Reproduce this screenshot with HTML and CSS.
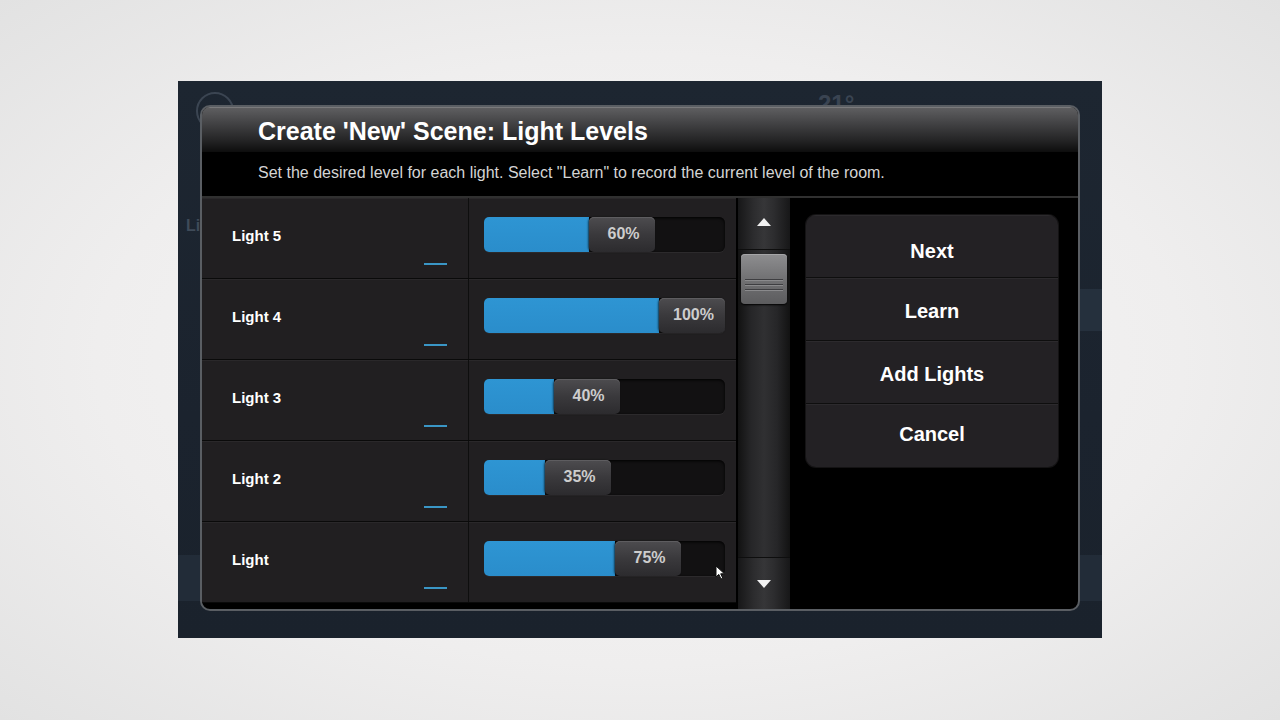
FILE: index.html
```html
<!DOCTYPE html>
<html lang="en">
<head>
    <meta charset="UTF-8">
    <meta name="viewport" content="width=device-width, initial-scale=1.0">
    <title>Create Scene - Light Levels</title>
    <link rel="stylesheet" href="styles.css">
</head>
<body>
    <div class="screen">
        <!-- things behind the dialog, mostly hidden -->
        <div class="bg-dial"></div>
        <span class="bg-temp">21°</span>
        <span class="bg-label">Li</span>
        <div class="bg-band"></div>
        <div class="bg-patch"></div>

        <div class="dialog">
            <div class="dialog-head">
                <h1>Create 'New' Scene: Light Levels</h1>
            </div>
            <p class="dialog-hint">Set the desired level for each light. Select "Learn" to record the current level of the room.</p>

            <div class="dialog-body">
                <div class="lights">
                    <div class="light-row">
                        <div class="light-name"><span>Light 5</span><i class="dash"></i></div>
                        <div class="light-level">
                            <div class="slider"><div class="slider-fill" style="width: 105px"></div><div class="slider-thumb">60%</div></div>
                        </div>
                    </div>
                    <div class="light-row">
                        <div class="light-name"><span>Light 4</span><i class="dash"></i></div>
                        <div class="light-level">
                            <div class="slider"><div class="slider-fill" style="width: 175px"></div><div class="slider-thumb">100%</div></div>
                        </div>
                    </div>
                    <div class="light-row">
                        <div class="light-name"><span>Light 3</span><i class="dash"></i></div>
                        <div class="light-level">
                            <div class="slider"><div class="slider-fill" style="width: 70px"></div><div class="slider-thumb">40%</div></div>
                        </div>
                    </div>
                    <div class="light-row">
                        <div class="light-name"><span>Light 2</span><i class="dash"></i></div>
                        <div class="light-level">
                            <div class="slider"><div class="slider-fill" style="width: 61px"></div><div class="slider-thumb">35%</div></div>
                        </div>
                    </div>
                    <div class="light-row">
                        <div class="light-name"><span>Light</span><i class="dash"></i></div>
                        <div class="light-level">
                            <div class="slider"><div class="slider-fill" style="width: 131px"></div><div class="slider-thumb">75%</div></div>
                        </div>
                    </div>
                </div>

                <div class="scrollbar">
                    <div class="scroll-btn">
                        <svg width="14" height="8" viewBox="0 0 14 8"><polygon points="7,0 14,8 0,8" fill="#f2f2f2"/></svg>
                    </div>
                    <div class="scroll-track">
                        <div class="scroll-thumb"><i></i><i></i><i></i></div>
                    </div>
                    <div class="scroll-btn scroll-btn-down">
                        <svg width="14" height="8" viewBox="0 0 14 8"><polygon points="0,0 14,0 7,8" fill="#f2f2f2"/></svg>
                    </div>
                </div>

                <div class="actions">
                    <div class="action-list">
                        <a href="javascript:;">Next</a>
                        <a href="javascript:;">Learn</a>
                        <a href="javascript:;">Add Lights</a>
                        <a href="javascript:;">Cancel</a>
                    </div>
                </div>
            </div>
        </div>

        <svg class="cursor" width="11" height="15" viewBox="0 0 11 15">
            <path d="M1 1 L1 12 L3.8 9.4 L6 14 L7.8 13.2 L5.7 8.8 L9.5 8.8 Z" fill="#fff" stroke="#111" stroke-width="1"/>
        </svg>
    </div>
</body>
</html>
```

FILE: styles.css
```css
* {
    padding: 0;
    margin: 0;
    box-sizing: border-box;
}

body {
    height: 100vh;
    display: flex;
    align-items: flex-start;
    justify-content: center;
    padding-top: 81px;
    background: radial-gradient(ellipse at center, #f8f7f7 0%, #efeeee 60%, #e2e2e2 100%);
    font-family: "Liberation Sans", Arial, sans-serif;
}

.screen {
    position: relative;
    width: 924px;
    height: 557px;
    padding: 24px 22px 27px;
    background: linear-gradient(180deg, #1d2631 0%, #1b232e 60%, #1a222c 100%);
    overflow: hidden;
}

.bg-dial {
    position: absolute;
    left: 18px;
    top: 11px;
    width: 38px;
    height: 38px;
    border: 2px solid #3b4552;
    border-radius: 50%;
}

.bg-temp {
    position: absolute;
    left: 640px;
    top: 9px;
    font-size: 24px;
    font-weight: bold;
    color: #3a4452;
}

.bg-label {
    position: absolute;
    left: 8px;
    top: 136px;
    font-size: 16px;
    font-weight: bold;
    color: #3f4b59;
}

.bg-band {
    position: absolute;
    left: 0;
    right: 0;
    top: 474px;
    height: 46px;
    background: #222c38;
}

.bg-patch {
    position: absolute;
    right: 0;
    top: 208px;
    width: 24px;
    height: 42px;
    background: #25303d;
}

.dialog {
    position: relative;
    height: 100%;
    border: 2px solid #5a5e63;
    border-radius: 10px;
    background: #000;
    overflow: hidden;
}

.dialog-head {
    height: 45px;
    padding-left: 56px;
    background: linear-gradient(180deg, #5e5e60 0%, #424244 35%, #232324 75%, #0d0d0d 100%);
    border-top: 1px solid #7a7a7c;
}

.dialog-head h1 {
    font-size: 25px;
    line-height: 47px;
    color: #fff;
}

.dialog-hint {
    height: 46px;
    padding-left: 56px;
    font-size: 16px;
    line-height: 42px;
    color: #d4d4d4;
    border-bottom: 2px solid #303030;
}

.dialog-body {
    display: flex;
    height: 411px;
}

.lights {
    width: 534px;
}

.light-row {
    display: flex;
    height: 81px;
    background: #211f21;
    border-bottom: 1px solid #0a0a0a;
    box-shadow: inset 0 1px 0 #2a282a;
}

.light-name {
    width: 267px;
    display: flex;
    flex-direction: column;
    padding: 29px 21px 0 30px;
    border-right: 1px solid #0e0e0e;
    font-size: 15px;
    line-height: 18px;
    font-weight: bold;
    color: #fff;
}

.light-name .dash {
    align-self: flex-end;
    width: 23px;
    height: 2px;
    margin-top: 18px;
    background: #3a96c6;
}

.light-level {
    flex: 1;
    padding: 19px 0 0 15px;
}

.slider {
    display: flex;
    width: 241px;
    height: 35px;
    border-radius: 6px;
    background: #121112;
    box-shadow: inset 0 1px 3px #000, 0 1px 0 #2c2a2c;
}

.slider-fill {
    height: 100%;
    border-radius: 5px 0 0 5px;
    background: linear-gradient(180deg, #2e95d3 0%, #2a8dcb 100%);
}

.slider-thumb {
    width: 66px;
    height: 100%;
    border-radius: 5px;
    background: linear-gradient(180deg, #4d4c4f 0%, #3a393c 50%, #2c2b2e 100%);
    box-shadow: inset 0 1px 0 #5e5d60, -1px 0 2px rgba(0, 0, 0, 0.6);
    text-align: center;
    padding-left: 3px;
    font-size: 16px;
    font-weight: bold;
    line-height: 34px;
    color: #cdcdcd;
}

.scrollbar {
    width: 52px;
    margin-left: 2px;
    display: flex;
    flex-direction: column;
    background: linear-gradient(90deg, #121212 0%, #262628 25%, #303032 50%, #262628 75%, #121212 100%);
}

.scroll-btn {
    height: 52px;
    display: flex;
    align-items: center;
    justify-content: center;
    border-bottom: 1px solid #0e0e0e;
    background: linear-gradient(90deg, #171718 0%, #2c2c2e 30%, #363638 50%, #2c2c2e 70%, #171718 100%);
}

.scroll-btn svg {
    margin-top: -3px;
}

.scroll-btn-down {
    border-bottom: 0;
    border-top: 1px solid #0e0e0e;
}

.scroll-btn-down svg {
    margin-top: 0;
}

.scroll-track {
    flex: 1;
    padding: 4px 3px 0;
}

.scroll-thumb {
    height: 50px;
    display: flex;
    flex-direction: column;
    justify-content: center;
    gap: 4px;
    padding: 10px 4px 0;
    border-radius: 4px;
    background: linear-gradient(180deg, #8e8e90 0%, #747476 45%, #5c5c5e 100%);
    box-shadow: inset 0 1px 0 #a5a5a7, 0 1px 2px #000;
}

.scroll-thumb i {
    display: block;
    height: 1px;
    background: #3e3e41;
    box-shadow: 0 1px 0 #8a8a8c;
}

.actions {
    flex: 1;
    padding: 17px 20px 0 16px;
}

.action-list {
    border-radius: 10px;
    background: #232124;
    box-shadow: 0 0 0 1px #141314;
    overflow: hidden;
}

.action-list a {
    display: block;
    height: 63px;
    padding-top: 3px;
    line-height: 60px;
    text-align: center;
    text-decoration: none;
    font-size: 20px;
    font-weight: bold;
    color: #fff;
    border-bottom: 1px solid #0e0e0e;
    box-shadow: inset 0 1px 0 #2c2a2d;
}

.action-list a:first-child {
    padding-top: 6px;
}

.action-list a:last-child {
    border-bottom: 0;
    padding-top: 0;
}

.cursor {
    position: absolute;
    left: 537px;
    top: 484px;
}
```
